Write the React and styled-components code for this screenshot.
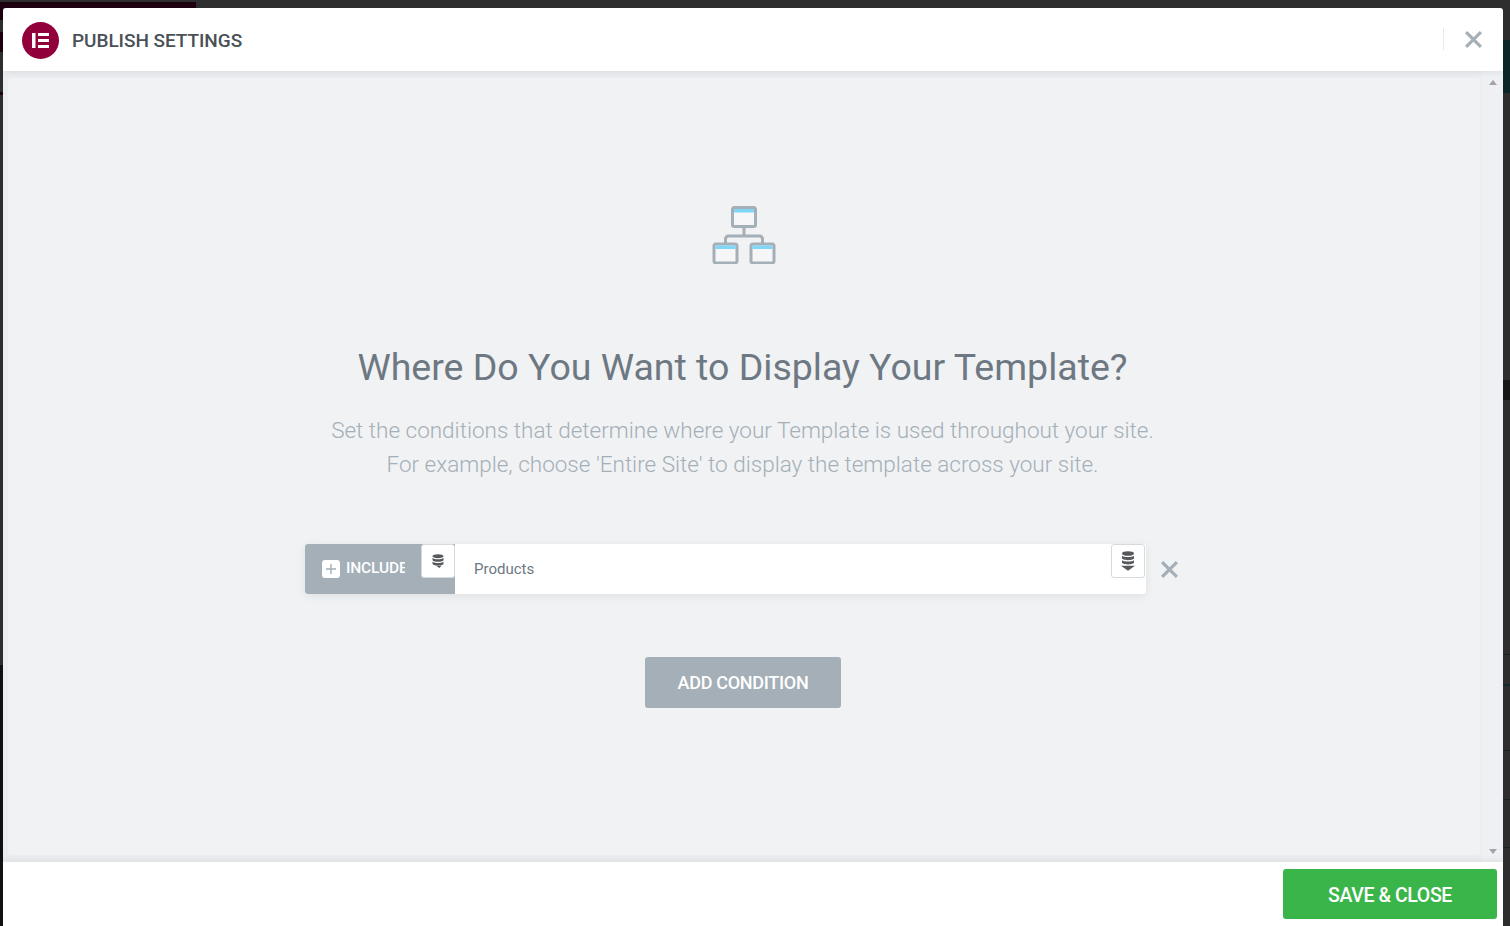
import React from "react";
import styled, { createGlobalStyle } from "styled-components";

const strip = (color, x, y, w, h) => `linear-gradient(${color}, ${color}) ${x}px ${y}px / ${w}px ${h}px no-repeat`;

const Global = createGlobalStyle`
  html, body { margin: 0; padding: 0; height: 926px; overflow: hidden; }
  body {
    font-family: Roboto, "Liberation Sans", sans-serif;
    background:
      ${strip("#1c0010", 0, 2, 196, 6)},
      ${strip("#1c0010", 0, 8, 3, 12)},
      ${strip("#1c0010", 0, 32, 3, 20)},
      ${strip("#1c0010", 0, 92, 3, 3)},
      ${strip("#101212", 0, 665, 3, 261)},
      ${strip("#0b2626", 1503, 40, 7, 53)},
      ${strip("#161616", 1503, 380, 7, 20)},
      ${strip("#1a2222", 1503, 654, 7, 1)},
      ${strip("#0f2a2a", 1503, 684, 7, 2)},
      ${strip("#1a2222", 1503, 750, 7, 1)},
      ${strip("#1a2222", 1503, 799, 7, 1)},
      ${strip("#1a2222", 1503, 847, 7, 1)},
      #2e2e2e;
  }
`;

const Modal = styled.div`
  width: 1500px; height: 918px; margin: 8px 0 0 3px;
  background: #fff; border-radius: 3px 3px 0 0;
  display: flex; flex-direction: column; overflow: hidden;
`;
const Header = styled.header`
  height: 63px; flex: none; display: flex; align-items: center;
  padding-left: 19px; position: relative; z-index: 1;
  box-shadow: 0 0 8px rgba(0,0,0,.1);
`;
const Logo = styled.div`
  width: 37px; height: 37px; border-radius: 50%; background: #92003b; margin-top: 1px;
  display: flex; align-items: center; justify-content: center; flex: none;
`;
const Title = styled.h1`
  margin: 1px 0 0 13px; font-size: 19px; font-weight: 500; color: #495157; letter-spacing: -.05px;
  line-height: 1; flex: 1; text-transform: uppercase;
`;
const HeaderClose = styled.div`
  width: 59px; height: 22px; border-left: 1px solid #e6e9ec; flex: none; margin-top: -1px;
  display: flex; align-items: center; justify-content: center;
`;
const Body = styled.main`
  flex: 1; display: flex; min-height: 0;
`;
const ContentArea = styled.div`
  flex: 1; display: flex; background: #ebedf0; padding: 7px 2px 7px 5px; min-width: 0;
`;
const Panel = styled.div`
  flex: 1; background: #f1f2f4; border-radius: 4px;
  display: flex; flex-direction: column; align-items: center; padding-top: 128px;
`;
const Scrollbar = styled.div`
  width: 21px; flex: none; background: #eff0f3; display: flex; flex-direction: column;
  justify-content: space-between; align-items: center; padding: 9px 0 8px; box-sizing: border-box;
`;
const Arrow = styled.i`
  width: 0; height: 0; border-left: 4.5px solid transparent; border-right: 4.5px solid transparent;
  ${p => p.$down ? "border-top: 5px solid #a3a3a8;" : "border-bottom: 5px solid #a3a3a8;"}
`;
const SitemapIcon = styled.svg`
  width: 64px; height: 58px; flex: none;
`;
const Heading = styled.h2`
  margin: 80px 0 0 -3px; font-size: 37.5px; font-weight: 400; color: #6d7882; line-height: 46px;
`;
const Sub = styled.p`
  margin: 23px 0 0 -3px; font-size: 22.5px; font-weight: 300; color: #a4afb7; line-height: 34px; text-align: center;
`;
const RowWrap = styled.div`
  display: flex; align-items: center; margin: 63px 0 0 -4px; width: 874px;
`;
const Row = styled.div`
  width: 841px; height: 50px; display: flex; background: #fff; border-radius: 3px;
  box-shadow: 0 2px 10px rgba(0,0,0,.08); position: relative;
`;
const Include = styled.div`
  width: 150px; flex: none; background: #a4afb7; border-radius: 3px 0 0 3px;
  display: flex; align-items: center; padding-left: 17px; box-sizing: border-box; position: relative;
`;
const PlusBox = styled.span`
  width: 18px; height: 18px; margin-top: -1px; background: #fff; border-radius: 3px; flex: none;
  display: flex; align-items: center; justify-content: center;
`;
const IncludeText = styled.span`
  margin-left: 6px; width: 59px; overflow: hidden; white-space: nowrap;
  color: #fff; font-size: 15.5px; font-weight: 500; letter-spacing: -.15px; line-height: 1;
`;
const DynBtn = styled.span`
  position: absolute; top: 0; right: ${p => p.$inset}px; width: 34px; height: 34px; box-sizing: border-box;
  background: #fff; border: 1px solid #d5dadf; border-radius: 3px;
  display: flex; align-items: center; justify-content: center;
`;
const Value = styled.div`
  flex: 1; padding-left: 19px; display: flex; align-items: center;
  font-size: 15px; color: #6d7882;
`;
const RemoveBtn = styled.div`
  margin-left: 14px; display: flex; align-items: center;
`;
const AddBtn = styled.button`
  margin: 63px 0 0 -2px; width: 196px; height: 51px; border: 0; border-radius: 3px;
  background: #a4afb7; color: #fff; font: 500 18px Roboto, sans-serif; letter-spacing: -.3px; padding: 0;
`;
const Footer = styled.footer`
  height: 64px; flex: none; display: flex; justify-content: flex-end; align-items: flex-start;
  padding: 7px 6px 0 0; box-sizing: border-box; position: relative;
  box-shadow: 0 0 8px rgba(0,0,0,.1);
`;
const SaveBtn = styled.button`
  width: 214px; height: 50px; border: 0; border-radius: 3px; background: #39b54a; color: #fff;
  font: 500 19.5px Roboto, sans-serif; letter-spacing: -.4px; padding: 2px 0 0;
`;

const Cross = () => (
  <svg width="19" height="19" viewBox="0 0 18 18" fill="none" stroke="#a4afb7" strokeWidth="3">
    <path d="M2 2l14 14M16 2L2 16" />
  </svg>
);
const DbSmall = () => (
  <svg width="12" height="14" viewBox="0 0 12 14" fill="#55595c">
    <ellipse cx="6" cy="2.200" rx="5.500" ry="2" />
    <path d="M.5 4c1.200.9 3.300 1.200 5.500 1.200S10.300 4.900 11.500 4v2c0 1-2.500 1.800-5.500 1.800S.5 7 .5 6z" />
    <path d="M.5 7.800c1.200.9 3.300 1.200 5.500 1.200s4.300-.3 5.500-1.200v1.900c0 1-2.500 1.800-5.500 1.800S.5 10.700.5 9.700z" />
    <path d="M4 11.800h5.500L7.500 14z" />
  </svg>
);
const DbBig = () => (
  <svg width="14" height="20" viewBox="0 0 14 20" fill="#55595c">
    <ellipse cx="7" cy="2.500" rx="6" ry="2.300" />
    <path d="M1 4.800c1.400 1 3.600 1.300 6 1.300s4.600-.3 6-1.300V7.300c0 1-2.700 1.900-6 1.900S1 8.300 1 7.300z" />
    <path d="M1 9.200c1.400 1 3.600 1.300 6 1.300s4.600-.3 6-1.300v2.400c0 1-2.700 1.900-6 1.900S1 12.600 1 11.600z" />
    <path d="M0 14.800h14L7 19.800z" />
  </svg>
);

export default function App() {
  return (
    <>
      <Global />
      <Modal>
        <Header>
          <Logo>
            <svg width="17" height="15" viewBox="0 0 17 15" fill="#fff">
              <rect x="0" y="0" width="3.500" height="15" />
              <rect x="6" y="0" width="11" height="3" />
              <rect x="6" y="6" width="11" height="3" />
              <rect x="6" y="12" width="11" height="3" />
            </svg>
          </Logo>
          <Title>Publish Settings</Title>
          <HeaderClose><Cross /></HeaderClose>
        </Header>
        <Body>
          <ContentArea>
            <Panel>
              <SitemapIcon viewBox="0 0 64 58" fill="none">
                <g fill="#fff" fillOpacity="0.35" stroke="#a4afb7" strokeWidth="3">
                  <rect x="20.500" y="1.500" width="23" height="19" rx="2" />
                  <rect x="2" y="38" width="23" height="19" rx="2" />
                  <rect x="39" y="38" width="23" height="19" rx="2" />
                </g>
                <g fill="#7fd6f5">
                  <rect x="22" y="3" width="20" height="3.500" />
                  <rect x="3.500" y="39.500" width="20" height="3.500" />
                  <rect x="40.500" y="39.500" width="20" height="3.500" />
                </g>
                <path d="M32 21v9M13.500 37v-4a3 3 0 0 1 3-3h31a3 3 0 0 1 3 3v4" stroke="#a4afb7" strokeWidth="3" />
              </SitemapIcon>
              <Heading>Where Do You Want to Display Your Template?</Heading>
              <Sub>
                Set the conditions that determine where your Template is used throughout your site.<br />
                For example, choose 'Entire Site' to display the template across your site.
              </Sub>
              <RowWrap>
                <Row>
                  <Include>
                    <PlusBox>
                      <svg width="12" height="12" viewBox="0 0 12 12" stroke="#a4afb7" strokeWidth="1.400"><path d="M6 1v10M1 6h10" /></svg>
                    </PlusBox>
                    <IncludeText>INCLUDE</IncludeText>
                    <DynBtn $inset={0}><DbSmall /></DynBtn>
                  </Include>
                  <Value>Products</Value>
                  <DynBtn $inset={1}><DbBig /></DynBtn>
                </Row>
                <RemoveBtn><Cross /></RemoveBtn>
              </RowWrap>
              <AddBtn>ADD CONDITION</AddBtn>
            </Panel>
          </ContentArea>
          <Scrollbar>
            <Arrow />
            <Arrow $down />
          </Scrollbar>
        </Body>
        <Footer>
          <SaveBtn>SAVE &amp; CLOSE</SaveBtn>
        </Footer>
      </Modal>
    </>
  );
}
